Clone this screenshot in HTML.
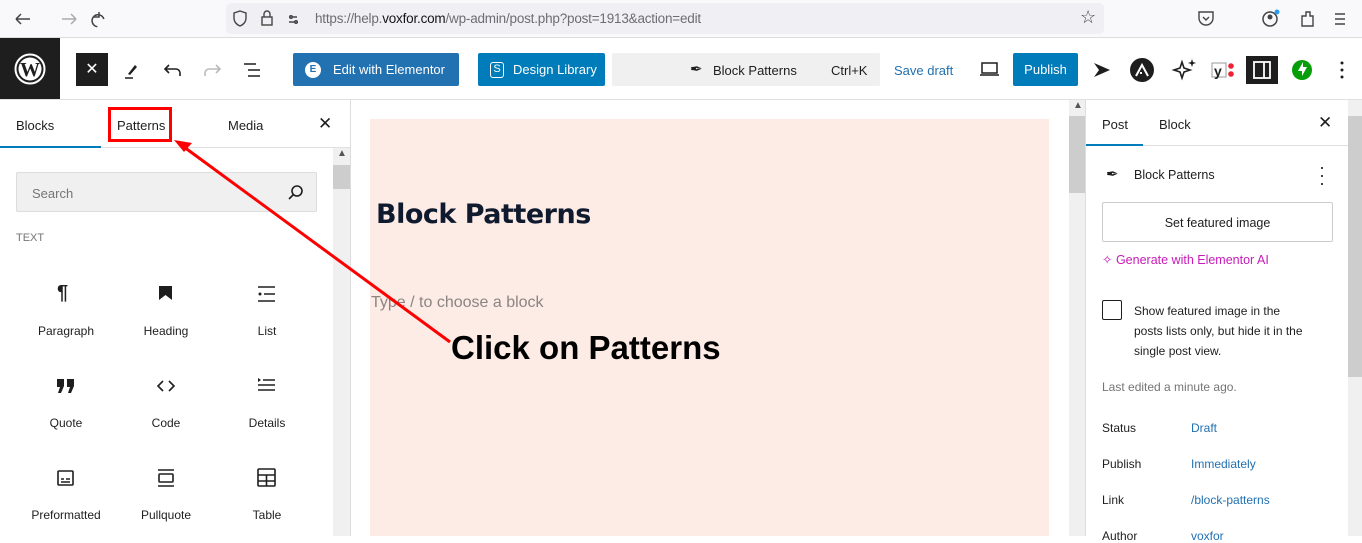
<!DOCTYPE html>
<html><head><meta charset="utf-8">
<style>
*{box-sizing:border-box;margin:0;padding:0}
body{width:1362px;height:536px;overflow:hidden;background:#fff;font-family:"Liberation Sans",sans-serif;font-size:13px;color:#1e1e1e;position:relative}
.a{position:absolute}
.browser{left:0;top:0;width:1362px;height:38px;background:#f9f9fb;border-bottom:1px solid #ddd}
.url{left:226px;top:3px;width:878px;height:31px;background:#f0f0f4;border-radius:5px}
.tb{left:0;top:38px;width:1362px;height:62px;background:#fff;border-bottom:1px solid #e0e0e0}
.btn{height:33px;top:53px;color:#fff;font-size:13px;display:flex;align-items:center;border-radius:2px}
.ic{stroke:#1e1e1e;fill:none;stroke-width:1.6}
.lbl{font-size:12px;text-align:center;width:100px}
</style></head><body>
<div class="a browser"></div>
<svg class="a" style="left:10px;top:8px" width="100" height="22" viewBox="0 0 100 22">
<path d="M6 11h14M6 11l5-5M6 11l5 5" stroke="#444" stroke-width="1.5" fill="none"/>
<path d="M52 11h14M66 11l-5-5M66 11l-5 5" stroke="#aaa" stroke-width="1.5" fill="none"/>
<path d="M92 6a6 6 0 1 0 0 10" stroke="#444" stroke-width="1.5" fill="none" transform="rotate(40 86 11)"/><path d="M89 4v5h-5" stroke="#444" stroke-width="1.5" fill="none"/>
</svg>
<div class="a url"></div>
<svg class="a" style="left:232px;top:9px" width="75" height="20"><path d="M8 2l6 2v5c0 4-3 7-6 8-3-1-6-4-6-8V4z" stroke="#444" fill="none" stroke-width="1.4"/><rect x="30" y="8" width="10" height="8" stroke="#444" fill="none" stroke-width="1.4"/><path d="M32 8V5a3 3 0 0 1 6 0v3" stroke="#444" fill="none" stroke-width="1.4"/><path d="M57 8h8M57 13h9" stroke="#444" stroke-width="1.4"/><circle cx="59" cy="8" r="1.5" stroke="#444" fill="none"/><circle cx="64" cy="13" r="1.5" stroke="#444" fill="none"/></svg>
<div class="a" style="left:315px;top:11px;font-size:13.5px;color:#6c6c74;letter-spacing:-0.2px">https://help.<span style="color:#15141a">voxfor.com</span>/wp-admin/post.php?post=1913&amp;action=edit</div>
<div class="a" style="left:1080px;top:7px;font-size:18px;color:#444">☆</div>
<svg class="a" style="left:1196px;top:8px" width="160" height="22"><path d="M3 4h14v6a7 7 0 0 1-14 0z" stroke="#444" fill="none" stroke-width="1.4"/><path d="M7 9l3 3 3-3" stroke="#444" fill="none" stroke-width="1.4"/><circle cx="74" cy="11" r="7" stroke="#444" fill="none" stroke-width="1.5"/><circle cx="74" cy="9" r="2.5" fill="#444"/><circle cx="81" cy="4" r="2.5" fill="#2b9cf2"/><path d="M106 18V8h4V4h4v4h3v10z" stroke="#444" fill="none" stroke-width="1.4"/><path d="M139 6h10M139 11h10M139 16h10" stroke="#444" stroke-width="1.5"/></svg>

<div class="a tb"></div>
<div class="a" style="left:0;top:38px;width:60px;height:61px;background:#1e1e1e"></div>
<svg class="a" style="left:14px;top:53px" width="32" height="32" viewBox="0 0 32 32"><circle cx="16" cy="16" r="14.5" fill="none" stroke="#fff" stroke-width="2"/><circle cx="16" cy="16" r="11.5" fill="#fff"/><text x="16" y="23" font-family="Liberation Serif" font-size="20" font-weight="bold" text-anchor="middle" fill="#1e1e1e">W</text></svg>
<div class="a" style="left:76px;top:53px;width:32px;height:33px;background:#1e1e1e;color:#fff;font-size:16px;text-align:center;line-height:33px">✕</div>
<svg class="a" style="left:120px;top:58px" width="150" height="24"><path d="M8 16l7-9 2 2-7 8z" fill="#1e1e1e"/><path d="M5 20h8" stroke="#1e1e1e" stroke-width="1.5"/><path d="M60 18v-3a4 4 0 0 0-4-4h-11M49 7l-4 4 4 4" class="ic"/><path d="M85 18v-3a4 4 0 0 1 4-4h11M96 7l4 4-4 4" stroke="#bbb" stroke-width="1.6" fill="none"/><path d="M124 6h12M128 12h12M128 18h12" class="ic"/></svg>
<div class="a btn" style="left:293px;width:166px;background:#2271b1"><span style="display:inline-block;width:16px;height:16px;border-radius:50%;background:#fff;margin:0 12px 0 12px;color:#2271b1;font-size:10px;text-align:center;line-height:16px;font-weight:bold">E</span>Edit with Elementor</div>
<div class="a btn" style="left:478px;width:127px;background:#007cba"><span style="display:inline-block;width:14px;height:16px;border:1.5px solid #fff;border-radius:3px;margin:0 9px 0 12px;font-size:11px;text-align:center;line-height:13px">S</span>Design Library</div>
<div class="a" style="left:612px;top:53px;width:268px;height:33px;background:#f0f0f0;border-radius:2px"></div>
<div class="a" style="left:690px;top:60px;font-size:15px">✒</div>
<div class="a" style="left:713px;top:63px;font-size:13px">Block Patterns</div>
<div class="a" style="left:831px;top:63px;font-size:13px">Ctrl+K</div>
<div class="a" style="left:894px;top:63px;font-size:13px;color:#2271b1">Save draft</div>
<svg class="a" style="left:979px;top:60px" width="22" height="18"><rect x="3" y="3" width="15" height="10" stroke="#1e1e1e" fill="none" stroke-width="1.5"/><path d="M1 15h19" stroke="#1e1e1e" stroke-width="1.5"/></svg>
<div class="a btn" style="left:1013px;width:65px;background:#007cba;justify-content:center">Publish</div>
<svg class="a" style="left:1090px;top:56px" width="270" height="28"><path d="M4 7l16 7-16 7 5-7z" fill="#1e1e1e"/><circle cx="52" cy="14" r="12" fill="#1e1e1e"/><path d="M46 20l6-11 6 11M50 17h2" stroke="#fff" stroke-width="2" fill="none"/><path d="M92 6l2 6 6 2-6 2-2 6-2-6-6-2 6-2z" class="ic"/><path d="M102 3l1 3 3 1-3 1-1 3-1-3-3-1 3-1z" fill="#1e1e1e"/><rect x="122" y="7" width="14" height="14" stroke="#999" fill="none"/><text x="124" y="20" font-size="14" font-weight="bold" fill="#1e1e1e">y</text><circle cx="141" cy="10" r="2.8" fill="#e23"/><circle cx="141" cy="18" r="2.8" fill="#e23"/><rect x="156" y="-3" width="32" height="33" fill="#1e1e1e"/><rect x="164" y="6" width="16" height="16" stroke="#fff" fill="none" stroke-width="1.8"/><path d="M174 6v16" stroke="#fff" stroke-width="1.8"/><circle cx="212" cy="14" r="10" fill="#069e08"/><path d="M213 6l-5 9h4v5l5-9h-4z" fill="#fff"/><circle cx="252" cy="7" r="1.5" fill="#1e1e1e"/><circle cx="252" cy="14" r="1.5" fill="#1e1e1e"/><circle cx="252" cy="21" r="1.5" fill="#1e1e1e"/></svg>

<!-- left panel -->
<div class="a" style="left:350px;top:100px;width:1px;height:436px;background:#ddd"></div>
<div class="a" style="left:0;top:147px;width:350px;height:1px;background:#e0e0e0"></div>
<div class="a" style="left:0;top:146px;width:101px;height:2px;background:#007cba"></div>
<div class="a" style="left:16px;top:118px;font-size:13px">Blocks</div>
<div class="a" style="left:117px;top:118px;font-size:13px">Patterns</div>
<div class="a" style="left:108px;top:107px;width:64px;height:35px;border:3px solid #f00"></div>
<div class="a" style="left:228px;top:118px;font-size:13px">Media</div>
<div class="a" style="left:318px;top:114px;font-size:17px">✕</div>
<div class="a" style="left:333px;top:148px;width:17px;height:388px;background:#f0f0f0"></div>
<div class="a" style="left:333px;top:165px;width:17px;height:24px;background:#cdcdcd"></div>
<div class="a" style="left:337px;top:148px;font-size:10px;color:#555">▲</div>
<div class="a" style="left:16px;top:172px;width:301px;height:40px;background:#f0f0f0;border:1px solid #ddd;border-radius:2px"></div>
<div class="a" style="left:32px;top:186px;font-size:13px;color:#757575">Search</div>
<svg class="a" style="left:287px;top:184px" width="18" height="18"><circle cx="10" cy="7" r="5" class="ic"/><path d="M6 11l-4 4" class="ic"/></svg>
<div class="a" style="left:16px;top:232px;font-size:11px;color:#757575">TEXT</div>
<div class="a" style="left:57px;top:282px;font-size:20px;font-weight:bold">¶</div>
<svg class="a" style="left:158px;top:286px" width="16" height="16"><path d="M1 0h13v14l-6.5-5-6.5 5z" fill="#1e1e1e"/></svg>
<svg class="a" style="left:257px;top:284px" width="20" height="20"><circle cx="3" cy="10" r="1.5" fill="#1e1e1e"/><path d="M1 3h17M7 10h11M1 17h17" class="ic"/></svg>
<div class="a lbl" style="left:16px;top:324px">Paragraph</div>
<div class="a lbl" style="left:116px;top:324px">Heading</div>
<div class="a lbl" style="left:217px;top:324px">List</div>
<svg class="a" style="left:57px;top:379px" width="18" height="14"><path d="M0 0h7v7l-3 7H1l2-6H0zM10 0h7v7l-3 7h-3l2-6h-3z" fill="#1e1e1e"/></svg>
<svg class="a" style="left:156px;top:378px" width="20" height="16"><path d="M7 3L2 8l5 5M13 3l5 5-5 5" class="ic"/></svg>
<svg class="a" style="left:257px;top:377px" width="20" height="16"><path d="M1 1l3 2-3 2z" fill="#1e1e1e"/><path d="M6 3h12M1 8h17M1 13h17" class="ic"/></svg>
<div class="a lbl" style="left:16px;top:416px">Quote</div>
<div class="a lbl" style="left:116px;top:416px">Code</div>
<div class="a lbl" style="left:217px;top:416px">Details</div>
<svg class="a" style="left:56px;top:468px" width="20" height="20"><rect x="2" y="3" width="15" height="14" rx="1" class="ic"/><path d="M5 11h3M10 11h4M5 14h9" stroke="#1e1e1e" stroke-width="1.4"/></svg>
<svg class="a" style="left:156px;top:468px" width="20" height="20"><path d="M2 2h16M2 18h16" class="ic"/><rect x="3" y="6" width="14" height="8" rx="1" class="ic"/></svg>
<svg class="a" style="left:257px;top:468px" width="20" height="20"><rect x="1" y="1" width="17" height="17" rx="1" class="ic"/><path d="M1 7h17M1 13h17M9.5 7v11" class="ic"/></svg>
<div class="a lbl" style="left:16px;top:508px">Preformatted</div>
<div class="a lbl" style="left:116px;top:508px">Pullquote</div>
<div class="a lbl" style="left:217px;top:508px">Table</div>

<!-- canvas -->
<div class="a" style="left:370px;top:119px;width:679px;height:417px;background:#fdebe5"></div>
<div class="a" style="left:376px;top:199px;font-size:27px;font-weight:bold;color:#0f1a2e;font-family:'DejaVu Sans',sans-serif;letter-spacing:-0.5px">Block Patterns</div>
<div class="a" style="left:371px;top:294px;font-size:16px;color:#8a8582">Type / to choose a block</div>
<div class="a" style="left:451px;top:329px;font-size:33px;font-weight:bold;color:#000">Click on Patterns</div>
<svg class="a" style="left:0;top:0" width="1362" height="536"><path d="M450 342L184 147" stroke="#f00" stroke-width="3"/><path d="M174 140l18 3-8 9z" fill="#f00"/></svg>
<div class="a" style="left:1069px;top:100px;width:17px;height:436px;background:#f0f0f0;border-right:1px solid #ddd"></div>
<div class="a" style="left:1069px;top:116px;width:16px;height:77px;background:#cdcdcd"></div>
<div class="a" style="left:1073px;top:100px;font-size:10px;color:#555">▲</div>

<!-- right panel -->
<div class="a" style="left:1086px;top:145px;width:262px;height:1px;background:#e0e0e0"></div>
<div class="a" style="left:1086px;top:144px;width:57px;height:2px;background:#007cba"></div>
<div class="a" style="left:1102px;top:117px;font-size:13px">Post</div>
<div class="a" style="left:1159px;top:117px;font-size:13px">Block</div>
<div class="a" style="left:1318px;top:113px;font-size:17px">✕</div>
<div class="a" style="left:1348px;top:100px;width:14px;height:436px;background:#f0f0f0"></div>
<div class="a" style="left:1348px;top:116px;width:14px;height:261px;background:#cdcdcd"></div>
<div class="a" style="left:1106px;top:165px;font-size:15px">✒</div>
<div class="a" style="left:1134px;top:168px;font-size:12.5px">Block Patterns</div>
<div class="a" style="left:1319px;top:163px;font-size:18px;line-height:8px;width:4px">·<br>·<br>·</div>
<div class="a" style="left:1102px;top:202px;width:231px;height:40px;border:1px solid #ccc;border-radius:2px;text-align:center;line-height:40px;font-size:12.5px">Set featured image</div>
<div class="a" style="left:1102px;top:252px;font-size:12.5px;color:#c71cb9">✧ Generate with Elementor AI</div>
<div class="a" style="left:1102px;top:300px;width:20px;height:20px;border:1.5px solid #1e1e1e;border-radius:2px"></div>
<div class="a" style="left:1134px;top:301px;font-size:12px;line-height:20px;width:170px">Show featured image in the posts lists only, but hide it in the single post view.</div>
<div class="a" style="left:1102px;top:380px;font-size:12px;color:#757575">Last edited a minute ago.</div>
<div class="a" style="left:1102px;top:421px;font-size:12px">Status</div>
<div class="a" style="left:1191px;top:421px;font-size:12px;color:#2271b1">Draft</div>
<div class="a" style="left:1102px;top:457px;font-size:12px">Publish</div>
<div class="a" style="left:1191px;top:457px;font-size:12px;color:#2271b1">Immediately</div>
<div class="a" style="left:1102px;top:493px;font-size:12px">Link</div>
<div class="a" style="left:1191px;top:493px;font-size:12px;color:#2271b1">/block-patterns</div>
<div class="a" style="left:1102px;top:529px;font-size:12px">Author</div>
<div class="a" style="left:1191px;top:529px;font-size:12px;color:#2271b1">voxfor</div>
</body></html>
